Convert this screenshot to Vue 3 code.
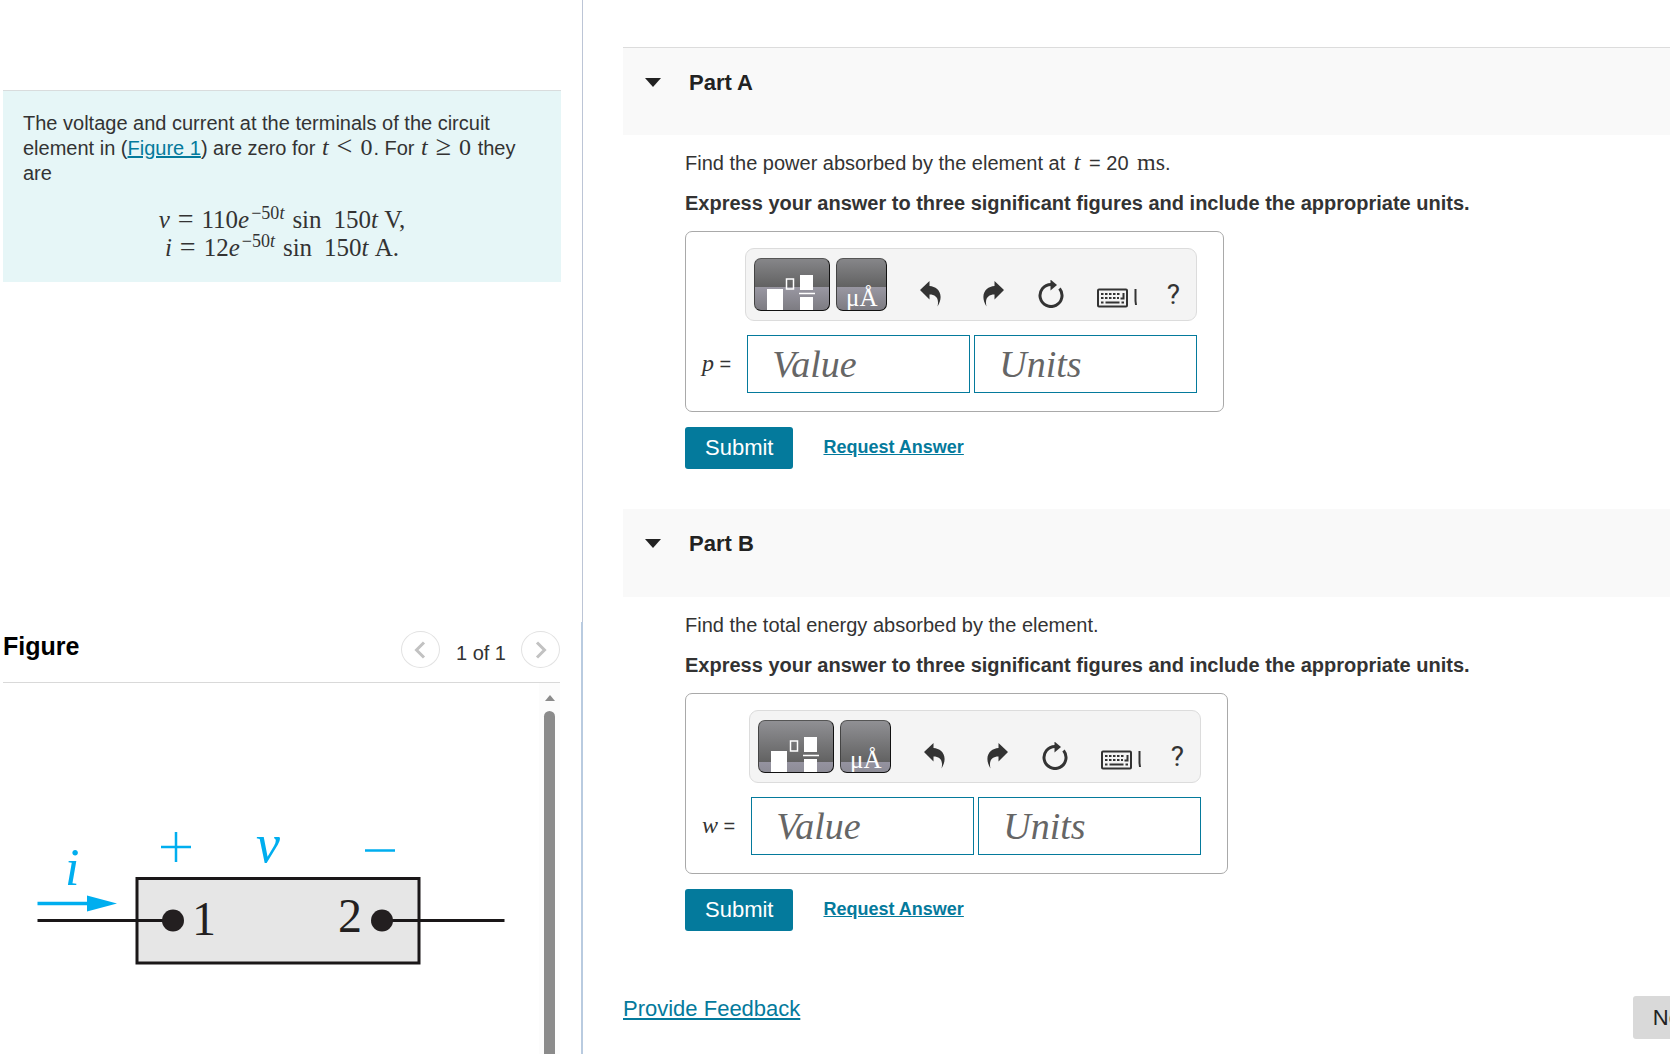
<script setup>
import { ref } from 'vue'

const parts = ref([
  { id: 'a', title: 'Part A', symbol: 'p', open: true, value: '', units: '' },
  { id: 'b', title: 'Part B', symbol: 'w', open: true, value: '', units: '' },
])

const equations = [
  { id: 'v', lhs: 'v', factor: '110', unit: 'V,' },
  { id: 'i', lhs: 'i', factor: '12', unit: 'A.' },
]

function clearPart(part) {
  part.value = ''
  part.units = ''
}
</script>

<template>
  <div class="page">
    <aside class="side">
      <section class="intro">
        <div class="problem">
          <p>
            The voltage and current at the terminals of the circuit element in (<a href="#figure">Figure 1</a>) are zero
            for <span class="math"><i>t</i><span class="rel">&lt;</span>0</span>. For
            <span class="math"><i>t</i><span class="rel">≥</span>0</span> they are
          </p>
          <div class="equations">
            <div v-for="eq in equations" :key="eq.id" class="equation">
              <i>{{ eq.lhs }}</i><span class="rel">=</span>{{ eq.factor }}<i>e</i><sup>−50<i>t</i></sup
              ><span class="fn">sin</span>150<i>t</i>&nbsp;{{ eq.unit }}
            </div>
          </div>
        </div>
      </section>

      <section id="figure" class="figure">
        <header class="figure-head">
          <h2>Figure</h2>
          <button class="round" type="button" aria-label="Previous figure">
            <svg width="12" height="18" viewBox="0 0 12 18"><path d="M10 1.5 2.500 9l7.500 7.500" /></svg>
          </button>
          <span class="count">1 of 1</span>
          <button class="round" type="button" aria-label="Next figure">
            <svg width="12" height="18" viewBox="0 0 12 18"><path d="M2 1.500 9.500 9 2 16.500" /></svg>
          </button>
        </header>
        <div class="figure-body">
          <svg class="circuit" width="480" height="170" viewBox="30 805 480 170">
            <rect x="137" y="878.500" width="282" height="84.500" fill="#e6e6e6" stroke="#1a1718" stroke-width="3" />
            <path d="M37.500 920.500H173M382 920.500h122.500" stroke="#1a1718" stroke-width="3" />
            <circle cx="173" cy="920.500" r="11" fill="#231f20" />
            <circle cx="382" cy="920.500" r="11" fill="#231f20" />
            <path d="M37.500 903.500H90" stroke="#00aeef" stroke-width="3.500" />
            <path d="M87 895.500 117 903.500 87 911.500z" fill="#00aeef" />
            <path d="M161 847h30M176 832v30M365 850.500h30" stroke="#00aeef" stroke-width="2.500" />
            <g font-family="Liberation Serif, serif">
              <text x="65" y="885" class="blue" font-size="52">i</text>
              <text x="256" y="862" class="blue" font-size="54">v</text>
              <text x="192" y="935" font-size="48">1</text>
              <text x="338" y="932" font-size="48">2</text>
            </g>
          </svg>
          <div class="scroll">
            <svg width="10" height="6" viewBox="0 0 10 6"><path d="M0 6 5 0l5 6z" fill="#8b8b8b" /></svg>
            <div class="thumb"></div>
          </div>
        </div>
      </section>
    </aside>

    <main class="main">
      <section v-for="part in parts" :key="part.id" class="part" :class="'part-' + part.id">
        <button class="part-head" type="button" :aria-expanded="part.open" @click="part.open = !part.open">
          <svg width="16" height="9" viewBox="0 0 16 9"><path d="M0 0h16L8 9z" fill="#222" /></svg>
          <span>{{ part.title }}</span>
        </button>

        <div v-if="part.open" class="part-body">
          <p v-if="part.id === 'a'" class="question">
            Find the power absorbed by the element at <span class="math time"><i>t</i></span> = 20
            <span class="math unit">ms</span>.
          </p>
          <p v-else class="question">Find the total energy absorbed by the element.</p>
          <p class="hint">Express your answer to three significant figures and include the appropriate units.</p>

          <div class="answer">
            <div class="toolbar">
              <button class="tpl wide" type="button" aria-label="Templates">
                <svg width="74" height="50" viewBox="1 1 74 50">
                  <path d="M13 30h16v21H13zM46 16h13v15H46zM46 38h13v13H46z" fill="#fff" />
                  <path d="M32.500 20h7v10h-7z" fill="none" stroke="#fff" stroke-width="1.500" />
                  <path d="M45 34.500h16" stroke="#fff" stroke-width="1.500" />
                </svg>
              </button>
              <button class="tpl" type="button" aria-label="Symbols"><span>μÅ</span></button>
              <button class="tool" type="button" aria-label="Undo">
                <svg width="24" height="28" viewBox="0 0 24 28">
                  <path d="M1 10 10.500 1v5C18.500 6.500 26 14 18.500 26.500 20.500 18 16.500 14.500 10.500 14.500v5z" />
                </svg>
              </button>
              <button class="tool" type="button" aria-label="Redo">
                <svg width="24" height="28" viewBox="0 0 24 28">
                  <path d="M23 10 13.500 1v5C5.500 6.500-2 14 5.500 26.500 3.500 18 7.500 14.500 13.500 14.500v5z" />
                </svg>
              </button>
              <button class="tool reset" type="button" aria-label="Reset" @click="clearPart(part)">
                <svg width="26" height="28" viewBox="0 0 26 28">
                  <path d="M13 4.500a11 11 0 1 0 8.500 4" fill="none" stroke="#333" stroke-width="3" />
                  <path d="M12.500-.5 19 5 12.500 10.500z" />
                </svg>
              </button>
              <button class="tool keys" type="button" aria-label="Keyboard shortcuts">
                <svg width="40" height="28" viewBox="0 0 40 28">
                  <rect x="1" y="9.500" width="29" height="17" rx="1" fill="none" stroke="#333" stroke-width="2" />
                  <path d="M4 14h20" stroke="#333" stroke-width="2" stroke-dasharray="2.500 1.500" />
                  <path d="M4 18h18" stroke="#333" stroke-width="2" stroke-dasharray="2.500 1.500" />
                  <path d="M4 22.500h2.500M8.500 22.500h14M24.500 22.500h2.500M26.500 13v5.500h-3" fill="none" stroke="#333" stroke-width="2" />
                  <path d="M38.500 9v12l.5 4" fill="none" stroke="#333" stroke-width="2" />
                </svg>
              </button>
              <button class="tool help" type="button" aria-label="Help">?</button>
            </div>
            <label :for="'value-' + part.id"><i>{{ part.symbol }}</i> =</label>
            <div class="fields">
              <input :id="'value-' + part.id" v-model="part.value" type="text" placeholder="Value" />
              <input v-model="part.units" type="text" placeholder="Units" aria-label="Units" />
            </div>
          </div>

          <div class="actions">
            <button class="submit" type="button">Submit</button>
            <a href="#">Request Answer</a>
          </div>
        </div>
      </section>

      <footer class="foot">
        <a href="#">Provide Feedback</a>
        <button class="next" type="button">Next</button>
      </footer>
    </main>
  </div>
</template>

<style>
body {
  margin: 0;
  background: #fff;
}
</style>

<style scoped>
* {
  box-sizing: border-box;
}
.page {
  display: flex;
  height: 100vh;
  overflow: hidden;
  font-family: 'Liberation Sans', Arial, sans-serif;
  font-size: 20px;
  color: #333;
}
a {
  color: #047a9c;
}
button {
  font-family: inherit;
  padding: 0;
  cursor: pointer;
}
p {
  margin: 0;
}
.math,
.equation {
  font-family: 'Liberation Serif', 'Times New Roman', serif;
  font-size: 24px;
  line-height: 20px;
}

/* left column */
.side {
  flex: 0 1 583px;
  display: flex;
  flex-direction: column;
}
.intro {
  flex: none;
  height: 59%;
  padding: 90px 21px 0 3px;
  border-right: 1px solid #bcc5d6;
}
.problem {
  padding: 20px;
  border-top: 1px solid #d9dcdd;
  background: #e6f6f7;
}
.problem p {
  line-height: 25px;
}
.problem .math {
  margin: 0 1px;
}
.equations {
  padding-top: 20px;
}
.equation {
  display: flex;
  justify-content: center;
  align-items: baseline;
  height: 28px;
  font-size: 25px;
  line-height: 28px;
}
.equation sup {
  align-self: flex-start;
  margin-left: 2px;
  font-size: 18px;
  line-height: 14px;
}
.rel {
  margin: 0 8px;
  font-size: 28px;
  line-height: 20px;
}
.fn {
  margin: 0 12px 0 8px;
}
.figure {
  flex: 1;
  display: flex;
  flex-direction: column;
  min-height: 0;
  padding: 0 21px 0 3px;
  border-right: 2px solid #b9cbe0;
}
.figure-head {
  display: flex;
  flex: none;
  align-items: center;
  height: 61px;
  padding-bottom: 4px;
  border-bottom: 1px solid #d9d9d9;
}
.figure-head h2 {
  flex: 1;
  margin: 0 0 6px;
  font-size: 25px;
  color: #000;
}
.count {
  margin: 8px 15px 0 16px;
}
.round {
  width: 39px;
  height: 37px;
  border: 1px solid #e2e2e2;
  border-radius: 50%;
  background: #fff;
}
.round svg {
  display: block;
  margin: auto;
}
.round path {
  fill: none;
  stroke: #c2c2c2;
  stroke-width: 3;
}
.figure-body {
  flex: 1;
  display: flex;
  min-height: 0;
}
.circuit {
  flex: none;
  margin: 122px auto 0 27px;
}
.circuit text {
  fill: #231f20;
}
.circuit .blue {
  fill: #00aeef;
  font-style: italic;
}
.scroll {
  display: flex;
  flex-direction: column;
  align-items: center;
  gap: 10px;
  width: 21px;
  padding-top: 12px;
  background: #fcfcfc;
}
.scroll svg {
  flex: none;
}
.thumb {
  flex: 1;
  width: 11px;
  border-radius: 6px 6px 0 0;
  background: #8b8b8b;
}

/* right column */
.main {
  flex: 1;
  min-width: 0;
  overflow: hidden;
  padding: 47px 0 0 40px;
}
.part {
  margin-bottom: 40px;
}
.part-head {
  display: flex;
  align-items: flex-start;
  gap: 28px;
  width: 100%;
  height: 88px;
  padding: 22px;
  border: 0;
  background: #f9f9f9;
  font-size: 22px;
  font-weight: bold;
  line-height: 26px;
  color: #222;
}
.part-a .part-head {
  border-top: 1px solid #dcdcdc;
}
.part-head svg {
  margin-top: 8px;
}
.part-body {
  padding: 16px 20px 0 62px;
}
.question,
.hint {
  line-height: 25px;
  margin-bottom: 15px;
}
.time,
.unit {
  margin: 0 3px;
}
.unit {
  margin-right: 0;
}
.hint {
  font-weight: bold;
}
.answer {
  display: inline-grid;
  grid-template-columns: auto 452px;
  gap: 14px;
  align-items: center;
  padding: 16px 26px 18px 16px;
  border: 1px solid #a9a9a9;
  border-radius: 7px;
  vertical-align: top;
}
.answer label {
  padding-bottom: 2px;
}
.answer label i {
  font-family: 'Liberation Serif', 'Times New Roman', serif;
  font-size: 24px;
}
.toolbar {
  grid-column: 2;
  display: flex;
  align-items: flex-start;
  height: 73px;
  padding: 9px 2px 0 8px;
  border: 1px solid #dcdcdc;
  border-radius: 9px;
  background: #f4f4f4;
}
.tpl {
  flex: none;
  width: 51px;
  height: 53px;
  margin-right: 6px;
  overflow: hidden;
  border: 1px solid #111;
  border-top-color: #555;
  border-left-color: #444;
  border-radius: 7px;
  background: linear-gradient(#868689, #626262 54%, #9a98a3 54%, #7d7c82);
  color: #fff;
}
.part-b .tpl {
  background: linear-gradient(#909094, #626262 80%, #9593a0 80%, #8d8c96);
}
.tpl.wide {
  width: 76px;
}
.tpl svg {
  display: block;
}
.tpl span {
  display: block;
  margin-top: 24px;
  font-family: 'Liberation Serif', 'Times New Roman', serif;
  font-size: 25px;
  line-height: 30px;
}
.tool {
  flex: 0 0 62px;
  height: 28px;
  margin-top: 22px;
  border: 0;
  background: none;
  color: #333;
}
.tpl + .tool {
  margin-left: 7px;
}
.tool svg {
  display: block;
  margin: auto;
  fill: #333;
}
.tool.reset {
  flex-basis: 54px;
}
.tool.keys {
  flex-basis: 77px;
}
.tool.help {
  flex-basis: 36px;
  font-family: Roboto, sans-serif;
  font-size: 28px;
  line-height: 30px;
}
.fields {
  display: grid;
  grid-template-columns: 1fr 1fr;
  gap: 4px;
  margin-left: 2px;
}
.fields input {
  width: 100%;
  height: 58px;
  padding: 0 24px;
  border: 1px solid #047a9c;
  font: italic 38px 'Liberation Serif', 'Times New Roman', serif;
  color: #333;
}
.fields input::placeholder {
  color: #666;
}
.actions {
  display: flex;
  align-items: center;
  gap: 30px;
  margin-top: 15px;
}
.submit,
.next {
  height: 42px;
  padding: 0 20px;
  border: 0;
  border-radius: 3px;
  background: #047a9c;
  font-size: 22px;
  color: #fff;
}
.actions a {
  padding-bottom: 2px;
  font-size: 18px;
  font-weight: bold;
}
.foot {
  display: flex;
  justify-content: space-between;
  margin: 65px -48px 0 0;
  font-size: 22px;
}
.next {
  height: 43px;
  background: #d9d9d9;
  color: #222;
}
</style>
